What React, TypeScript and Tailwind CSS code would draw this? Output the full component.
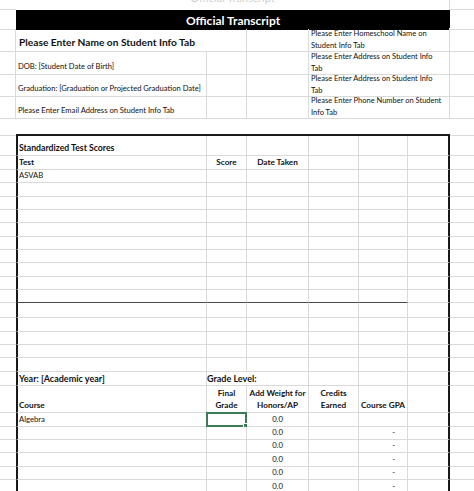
import { ReactNode } from "react";

const GRID = "grid grid-cols-[16px_191px_40px_62px_50px_49px_42px_24px]";

interface CellDef {
  text?: ReactNode;
  className?: string;
  open?: boolean;
  selected?: boolean;
}

interface BoxRowProps {
  height: string;
  cells?: CellDef[];
  rule?: boolean;
}

const Side = ({ className = "" }: { className?: string }) => (
  <div className={`border-b border-b-[#dadada] ${className}`} />
);

const BoxRow = ({ height, cells = [], rule = false }: BoxRowProps) => (
  <div className={`${GRID} ${height}`}>
    <Side />
    {[0, 1, 2, 3, 4, 5].map((i) => {
      const cell = cells[i] || {};
      const classes = [
        "relative flex items-end whitespace-nowrap pb-[1px] text-[7.7px] leading-[11px]",
        i === 0 ? "border-l-2 border-l-[#1a1a1a] pl-[1px]" : "",
        i === 5 ? "border-r-2 border-r-[#1a1a1a]" : cell.open ? "" : "border-r border-r-[#dadada]",
        rule && i < 5 ? "border-b border-b-[#4a4a4a]" : "border-b border-b-[#dadada]",
        cell.className || "",
      ]
        .filter(Boolean)
        .join(" ");
      return (
        <div key={i} className={classes}>
          {cell.text}
          {cell.selected && (
            <div className="absolute -left-[1px] -top-[1px] -right-[1px] -bottom-[1px] border-2 border-[#3d7a56]">
              <div className="absolute -right-[3px] -bottom-[3px] h-[5px] w-[5px] border border-white bg-[#3d7a56]" />
            </div>
          )}
        </div>
      );
    })}
    <Side />
  </div>
);

const InfoRow = ({ height, left, right, name }: { height: string; left: string; right: ReactNode; name?: boolean }) => (
  <div className={`${GRID} ${height}`}>
    <Side className="border-r border-r-[#dadada]" />
    {name ? (
      <div className="col-span-2 flex items-end whitespace-nowrap border-r border-b border-r-[#dadada] border-b-[#dadada] pb-[2px] pl-[3px] text-[10.2px] font-bold leading-[13px]">
        {left}
      </div>
    ) : (
      <>
        <div className="flex items-end whitespace-nowrap border-r border-b border-r-[#dadada] border-b-[#dadada] pb-[2px] pl-[2px] text-[7.6px] leading-[11px]">
          {left}
        </div>
        <div className="border-r border-b border-r-[#dadada] border-b-[#dadada]" />
      </>
    )}
    <div className="border-r border-b border-r-[#dadada] border-b-[#dadada]" />
    <div className="col-span-3 -mt-[1px] border-r border-b border-r-[#dadada] border-b-[#dadada] pl-[2px] text-[7.5px] leading-[11.5px]">
      {right}
    </div>
    <Side />
  </div>
);

const bold = "font-bold text-[8.2px]";
const center = "justify-center";

export default function App() {
  const blank = [14, 13, 13, 14, 13, 13, 14, 13, 13];
  const gpaRows = ["h-[13px]", "h-[13px]", "h-[14px]", "h-[13px]", "h-[14px]"];

  return (
    <div className="h-[491px] w-[474px] overflow-hidden bg-white font-['Lato',sans-serif] text-[#111]">
      {/* title row of the sheet above, mostly scrolled out of view */}
      <div className={`${GRID} h-[10px]`}>
        <Side />
        <div className="col-span-6 overflow-hidden border-r border-r-[#dadada]">
          <div className="-mt-[9px] text-center text-[11px] leading-[14px] text-[#cfcfcf]">Official Transcript</div>
        </div>
        <Side />
      </div>

      <div className={`${GRID} h-[19px]`}>
        <Side />
        <div className="col-span-6 flex items-center justify-center bg-black pt-[2px] text-[12px] font-bold text-white">
          Official Transcript
        </div>
        <Side />
      </div>

      <InfoRow
        height="h-[23px]"
        name
        left="Please Enter Name on Student Info Tab"
        right={
          <>
            Please Enter Homeschool Name on
            <br />
            Student Info Tab
          </>
        }
      />
      <InfoRow
        height="h-[22px]"
        left="DOB: [Student Date of Birth]"
        right={
          <>
            Please Enter Address on Student Info
            <br />
            Tab
          </>
        }
      />
      <InfoRow
        height="h-[22px]"
        left="Graduation: [Graduation or Projected Graduation Date]"
        right={
          <>
            Please Enter Address on Student Info
            <br />
            Tab
          </>
        }
      />
      <InfoRow
        height="h-[23px]"
        left="Please Enter Email Address on Student Info Tab"
        right={
          <>
            Please Enter Phone Number on Student
            <br />
            Info Tab
          </>
        }
      />

      <div className={`${GRID} h-[17px]`}>
        <Side />
        <div className="col-span-6 border-b-2 border-b-[#1a1a1a]" />
        <Side />
      </div>

      <BoxRow height="h-[20px]" cells={[{ text: "Standardized Test Scores", className: "text-[8.7px] font-bold pb-[2px]" }]} />
      <BoxRow
        height="h-[14px]"
        cells={[
          { text: "Test", className: bold },
          { text: "Score", className: `${bold} ${center}` },
          { text: "Date Taken", className: `${bold} ${center}` },
        ]}
      />
      <BoxRow height="h-[13px]" cells={[{ text: "ASVAB" }]} />
      {blank.map((h, i) => (
        <BoxRow key={i} height={h === 14 ? "h-[14px]" : "h-[13px]"} rule={i === blank.length - 1} />
      ))}

      <BoxRow height="h-[15px]" />
      <BoxRow height="h-[14px]" />
      <BoxRow height="h-[13px]" />
      <BoxRow height="h-[13px]" />
      <BoxRow height="h-[14px]" />

      <BoxRow
        height="h-[14px]"
        cells={[
          { text: "Year: [Academic year]", className: "text-[9px] font-bold" },
          { text: "Grade Level:", className: "text-[9px] font-bold", open: true },
        ]}
      />
      <BoxRow
        height="h-[27px]"
        cells={[
          { text: "Course", className: bold },
          { text: <span className="text-center">Final<br />Grade</span>, className: `${bold} ${center} leading-[12px]` },
          { text: <span className="text-center">Add Weight for<br />Honors/AP</span>, className: `${bold} ${center} leading-[12px]` },
          { text: <span className="text-center">Credits<br />Earned</span>, className: `${bold} ${center} leading-[12px]` },
          { text: "Course GPA", className: `${bold} ${center}` },
        ]}
      />
      <BoxRow
        height="h-[14px]"
        cells={[{ text: "Algebra" }, { selected: true }, { text: "0.0", className: center }]}
      />
      {gpaRows.map((h, i) => (
        <BoxRow
          key={i}
          height={h}
          cells={[{}, {}, { text: "0.0", className: center }, {}, { text: "-", className: "justify-end pr-[12px]" }]}
        />
      ))}
    </div>
  );
}
